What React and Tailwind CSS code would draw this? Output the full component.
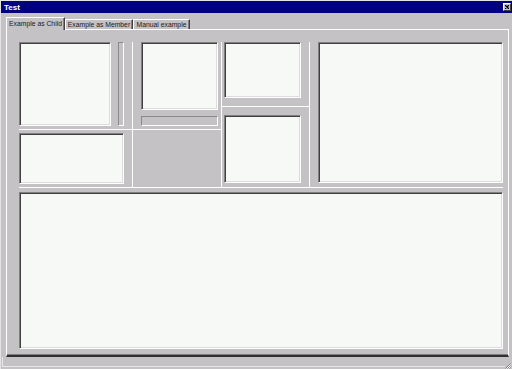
import React from "react";

const face = "bg-[#c5c2c5]";

function Pane({ className = "" }) {
  return (
    <div
      className={`bg-[#f6f9f6] border border-t-[#808080] border-l-[#808080] border-b-white border-r-white shadow-[inset_1px_1px_0_#404040,inset_-1px_-1px_0_#dcdcdc] ${className}`}
    />
  );
}

function Groove({ className = "" }) {
  return (
    <div
      className={`border border-t-[#8a888a] border-l-[#8a888a] border-b-white border-r-white ${className}`}
    />
  );
}

const tabs = [
  { name: "Example as Child", w: "w-[59px]", active: true },
  { name: "Example as Member", w: "w-[68px]" },
  { name: "Manual example", w: "w-[57px]" },
];

export default function App() {
  return (
    <div
      className={`w-[512px] h-[369px] ${face} border-t border-l border-[#e4e2e4] flex flex-col overflow-hidden text-[#202020]`}
      style={{ fontFamily: '"Liberation Sans", Arial, sans-serif' }}
    >
      {/* title bar */}
      <div className="h-[12px] bg-[#000080] flex items-center justify-between pl-[3px] pr-px shrink-0">
        <span className="text-white font-bold text-[8px] leading-none pt-px">Test</span>
        <div className={`w-[8px] h-[8px] ${face} border border-t-white border-l-white border-r-[#404040] border-b-[#404040] flex items-center justify-center`}>
          <svg width="4" height="4" viewBox="0 0 4 4">
            <path d="M0 0L4 4M4 0L0 4" stroke="#000" strokeWidth="1.3" />
          </svg>
        </div>
      </div>

      {/* tabs */}
      <div className="h-[4px] shrink-0" />
      <div className="h-[12px] ml-[5px] flex items-end shrink-0">
        {tabs.map((t) =>
          t.active ? (
            <div
              key={t.name}
              className={`relative z-10 -mb-px h-[13px] ${t.w} ${face} flex items-center justify-center pt-px border-t border-l border-t-white border-l-white border-r border-r-[#404040] shadow-[inset_-1px_0_0_#808080] text-[6.8px] leading-none whitespace-nowrap`}
            >
              {t.name}
            </div>
          ) : (
            <div
              key={t.name}
              className={`h-[10px] ${t.w} flex items-center justify-center pt-px border-t border-l border-t-white border-l-white border-r border-r-[#404040] shadow-[inset_-1px_0_0_#808080] text-[6.8px] leading-none whitespace-nowrap`}
            >
              {t.name}
            </div>
          )
        )}
      </div>

      {/* tab panel */}
      <div className="w-[503px] h-[328px] ml-[5px] shrink-0 border-t border-l border-r border-t-white border-l-white border-r-white border-b-2 border-b-[#303030] shadow-[inset_0_-1px_0_#808080] pl-[12px] pr-[5px] pt-[12px] pb-[6px] flex flex-col">
        {/* upper splitter row */}
        <div className="h-[145px] flex shrink-0">
          {/* column 1 */}
          <div className="w-[113px] flex flex-col">
            <div className="flex h-[84px] gap-[7px]">
              <Pane className="w-[92px] h-full" />
              <Groove className="w-[6px] h-full" />
            </div>
            <div className="h-[3px]" />
            <div className="h-px bg-white" />
            <div className="h-[3px]" />
            <Pane className="w-[105px] h-[51px]" />
          </div>
          <div className="w-px bg-white" />

          {/* column 2 */}
          <div className="w-[88px] flex flex-col">
            <div className="pl-[8px] pr-[3px] flex flex-col">
              <Pane className="h-[68px]" />
              <Groove className="h-[10px] mt-[6px]" />
            </div>
            <div className="h-[3px]" />
            <div className="h-px bg-white" />
          </div>
          <div className="w-px bg-white" />

          {/* column 3 */}
          <div className="w-[87px] flex flex-col">
            <div className="pl-[2px] pr-[8px]">
              <Pane className="h-[56px]" />
            </div>
            <div className="h-[8px]" />
            <div className="h-px bg-white" />
            <div className="h-[8px]" />
            <div className="pl-[2px] pr-[8px]">
              <Pane className="h-[68px]" />
            </div>
          </div>
          <div className="w-px bg-white" />

          {/* column 4 */}
          <div className="flex-1 pl-[8px]">
            <Pane className="h-[141px]" />
          </div>
        </div>

        {/* horizontal sash */}
        <div className="h-px bg-white shrink-0" />
        <div className="h-[4px] shrink-0" />

        {/* bottom pane */}
        <Pane className="flex-1" />
      </div>

      {/* status bar */}
      <div className="h-[12px] flex shrink-0">
        <div className="flex-1 ml-px h-[10px] border-l border-b border-l-[#e8e6e8] border-b-[#e8e6e8]" />
        <div className="w-[6px] self-end mr-px">
          <svg width="6" height="6" viewBox="0 0 6 6" className="block">
            <path d="M5.5 0.5L0.5 5.5M5.5 2.5L2.5 5.5M5.5 4.5L4.5 5.5" stroke="#808080" strokeWidth="1" />
            <path d="M5.5 1.5L1.5 5.5M5.5 3.5L3.5 5.5" stroke="#ffffff" strokeWidth="1" />
          </svg>
        </div>
      </div>
    </div>
  );
}
